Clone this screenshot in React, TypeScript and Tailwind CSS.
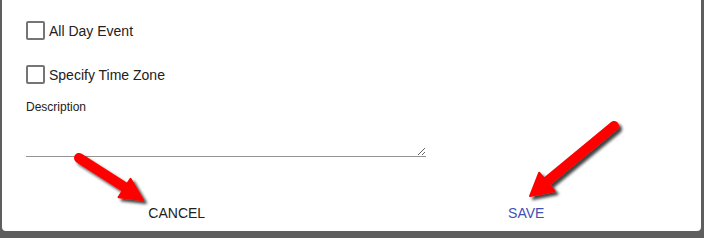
import type { ReactNode } from "react";

function CheckRow({ children }: { children: ReactNode }) {
  return (
    <label className="flex h-[19px] items-center">
      <span className="h-[19px] w-[19px] rounded-[2px] border-2 border-[#757575] bg-white" />
      <span className="ml-[4px] pt-[2px] text-[14px] leading-[19px] text-[#212121]">{children}</span>
    </label>
  );
}

function Arrows() {
  return (
    <svg
      className="pointer-events-none absolute left-0 top-0"
      width={704}
      height={238}
      viewBox="0 0 704 238"
    >
      <defs>
        <filter id="shadow" x="-20%" y="-20%" width="150%" height="150%">
          <feDropShadow dx="3" dy="3" stdDeviation="1.6" floodColor="#000" floodOpacity="0.75" />
        </filter>
      </defs>
      <g filter="url(#shadow)" fill="#ff0000" stroke="#ff0000" strokeLinecap="round" strokeLinejoin="round">
        <line x1="79" y1="158" x2="126" y2="188" strokeWidth="10" />
        <polygon points="143,200 118.5,197.2 130.5,178.8" strokeWidth="2" />
        <line x1="614" y1="126" x2="545" y2="183" strokeWidth="10" />
        <polygon points="530,196 554.6,191.1 539.2,172.7" strokeWidth="2" />
      </g>
    </svg>
  );
}

export default function App() {
  return (
    <div
      className="relative h-[238px] w-[704px] bg-[#5e5e5e] pb-[7px] pl-[2px] pr-[3px]"
      style={{ fontFamily: '"Liberation Sans", Arial, sans-serif' }}
    >
      <div className="flex h-full flex-col rounded-b-[4px] bg-white">
        <div className="flex flex-col pl-6 pt-[21px]">
          <CheckRow>All Day Event</CheckRow>
          <div className="mt-[25px]">
            <CheckRow>Specify Time Zone</CheckRow>
          </div>
          <p className="mt-[16px] text-[12px] leading-[14px] text-[#212121]">Description</p>
          <textarea
            className="mt-[3px] h-[40px] w-[400px] border-0 border-b border-[#949494] bg-transparent text-[14px] outline-none"
            rows={2}
          />
        </div>
        <div className="mt-auto flex pb-[10px]">
          <div className="flex flex-1 justify-center">
            <button className="text-[14px] leading-[16px] text-[#212121]">CANCEL</button>
          </div>
          <div className="flex flex-1 justify-center">
            <button className="text-[14px] leading-[16px] text-[#3f51b5]">SAVE</button>
          </div>
        </div>
      </div>
      <Arrows />
    </div>
  );
}
